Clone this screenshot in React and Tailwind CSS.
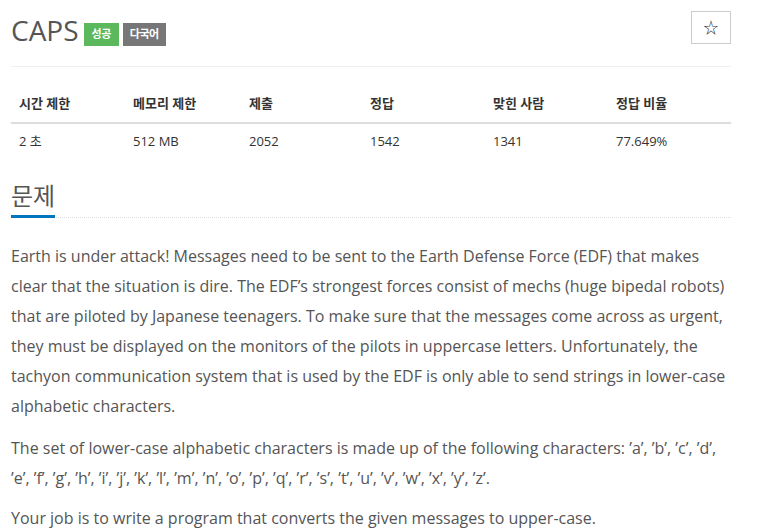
import React from 'react';

const stats = [
  { label: '시간 제한', value: '2 초', w: 'w-[114px]' },
  { label: '메모리 제한', value: '512 MB', w: 'w-[116px]' },
  { label: '제출', value: '2052', w: 'w-[121px]' },
  { label: '정답', value: '1542', w: 'w-[123px]' },
  { label: '맞힌 사람', value: '1341', w: 'w-[123px]' },
  { label: '정답 비율', value: '77.649%', w: '' },
];

const letters = 'abcdefghijklmnopqrstuvwxyz'.split('');

export default function App() {
  return (
    <div className="bg-white min-h-[532px] px-[11px] font-['Open_Sans','Noto_Sans_CJK_KR',sans-serif] text-[#555]">
      <div className="w-[720px]">
        {/* 제목 */}
        <div className="flex items-start justify-between pt-[11px] pb-[19px] border-b border-[#eee]">
          <div className="flex items-end gap-[4px] pt-[2px]">
            <h1 className="text-[28px] leading-[34px] font-normal text-[#555] mr-[1px]">CAPS</h1>
            <span className="mb-[1px] px-[8px] h-[23px] flex items-center bg-[#5cb85c] text-white text-[11px] tracking-[-0.5px] font-bold">성공</span>
            <span className="mb-[1px] px-[7px] h-[23px] flex items-center bg-[#777] text-white text-[11px] tracking-[-0.5px] font-bold">다국어</span>
          </div>
          <button className="w-[40px] h-[33px] border border-[#ccc] flex items-center justify-center text-[15px] text-[#333] bg-white">☆</button>
        </div>

        {/* 정보 테이블 */}
        <table className="w-full text-[13px] text-[#333] mt-[18px]">
          <thead>
            <tr className="border-b-2 border-[#ddd]">
              {stats.map((s) => (
                <th key={s.label} className={`${s.w} text-left font-bold px-[8px] pb-[8px] pt-[9px]`}>{s.label}</th>
              ))}
            </tr>
          </thead>
          <tbody>
            <tr>
              {stats.map((s) => (
                <td key={s.label} className="text-left px-[8px] py-[8px]">{s.value}</td>
              ))}
            </tr>
          </tbody>
        </table>

        {/* 문제 */}
        <div className="mt-[20px] border-b border-dotted border-[#ddd] flex">
          <h2 className="text-[24px] leading-[34px] text-[#555] border-b-[3px] border-[#0076c0] -mb-px pb-[2px]">문제</h2>
        </div>

        <div className="mt-[23px] text-[16px] leading-[30px] text-[#555]">
          <p>
            Earth is under attack! Messages need to be sent to the Earth Defense Force (EDF) that makes clear that the situation is dire. The EDF’s strongest forces consist of mechs (huge bipedal robots) that are piloted by Japanese teenagers. To make sure that the messages come across as urgent, they must be displayed on the monitors of the pilots in uppercase letters. Unfortunately, the tachyon communication system that is used by the EDF is only able to send strings in lower-case alphabetic characters.
          </p>
          <p className="mt-[12px]">
            The set of lower-case alphabetic characters is made up of the following characters: {letters.map((c) => `’${c}’`).join(', ')}.
          </p>
          <p className="mt-[10px]">Your job is to write a program that converts the given messages to upper-case.</p>
        </div>
      </div>
    </div>
  );
}
